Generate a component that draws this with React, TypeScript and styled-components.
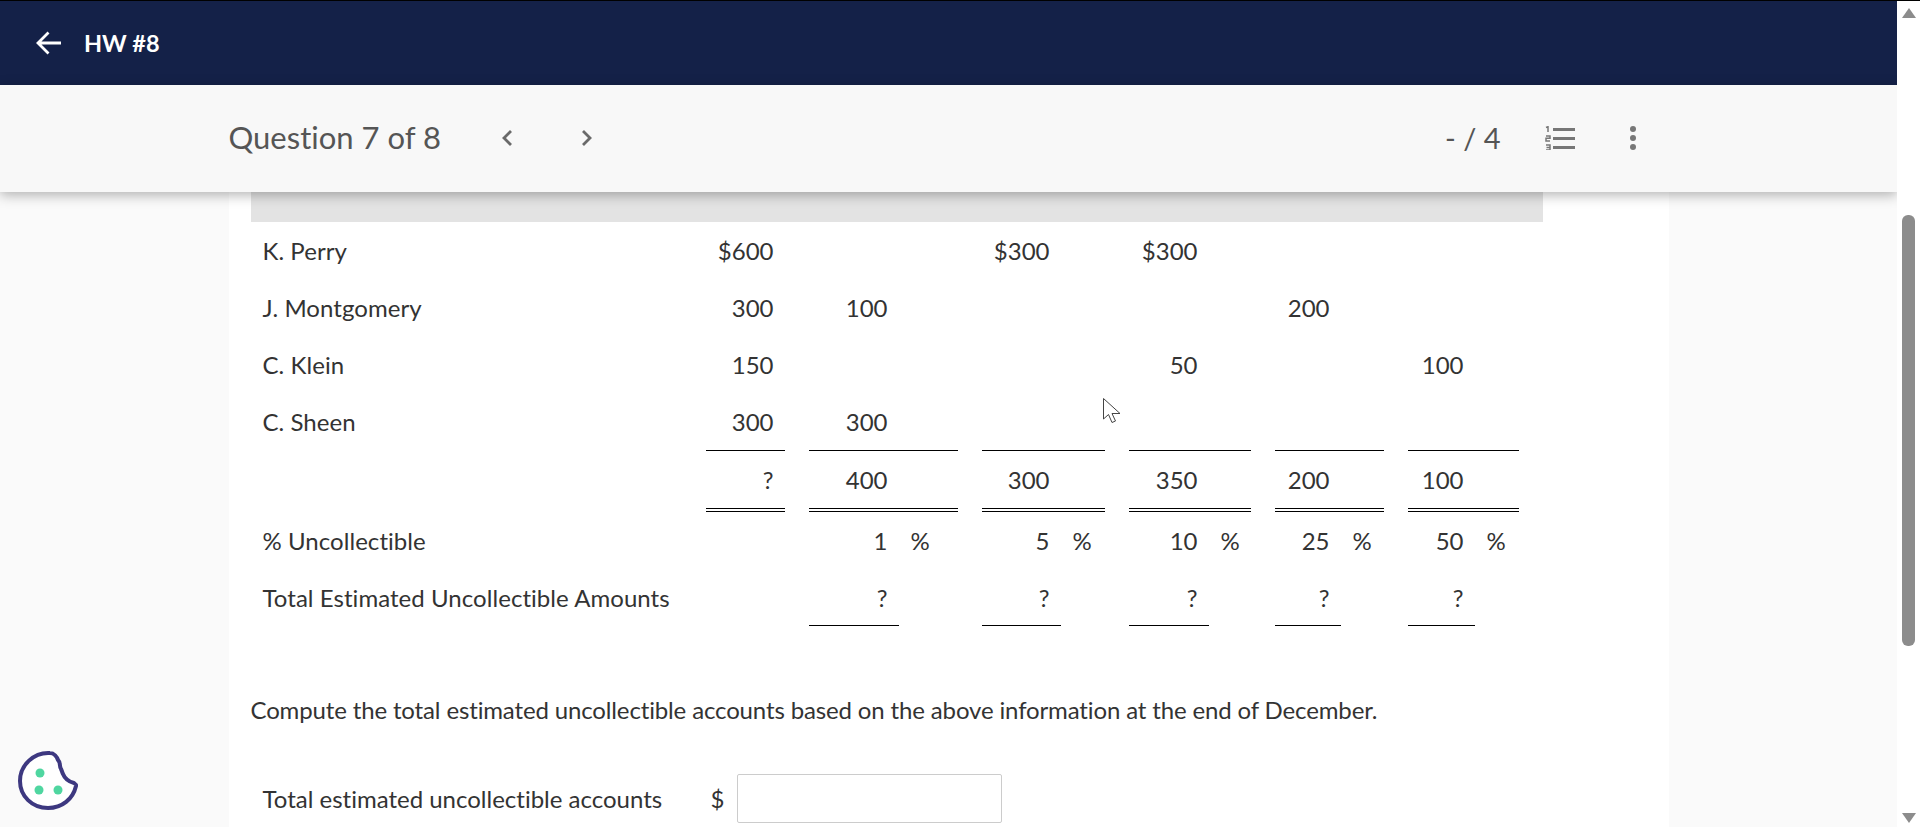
import React from "react";
import styled, { createGlobalStyle } from "styled-components";

type Rule = "none" | "single" | "double";

interface Row {
  label?: string;
  first?: string;
  cells: string[];
  rule?: "sum" | "total" | "answer";
  percent?: boolean;
}

const GROUPS = [
  [90, 59],
  [79, 44],
  [80, 42],
  [66, 43],
  [67, 44],
];

const rows: Row[] = [
  { label: "K. Perry", first: "$600", cells: ["", "$300", "$300", "", ""] },
  { label: "J. Montgomery", first: "300", cells: ["100", "", "", "200", ""] },
  { label: "C. Klein", first: "150", cells: ["", "", "50", "", "100"] },
  { label: "C. Sheen", first: "300", cells: ["300", "", "", "", ""], rule: "sum" },
  { first: "?", cells: ["400", "300", "350", "200", "100"], rule: "total" },
  { label: "% Uncollectible", cells: ["1", "5", "10", "25", "50"], percent: true },
  { label: "Total Estimated Uncollectible Amounts", cells: ["?", "?", "?", "?", "?"], rule: "answer" },
];

const GlobalStyle = createGlobalStyle`
  html, body {
    margin: 0;
    height: 100%;
    overflow: hidden;
    background: #fafafa;
    font-family: Lato, "Liberation Sans", sans-serif;
    font-variant-ligatures: none;
    color: #333;
  }
`;

const Screen = styled.div`
  position: relative;
  display: flex;
  box-sizing: border-box;
  height: 827px;
  border-top: 1px solid #000;
  overflow: hidden;
`;

const Page = styled.div`
  flex: 1;
  min-width: 0;
  display: flex;
  flex-direction: column;
`;

const TopBar = styled.header`
  height: 84px;
  flex-shrink: 0;
  display: flex;
  align-items: center;
  gap: 23px;
  padding-left: 36px;
  background: #142148;
  color: #fff;
  font-size: 23.5px;
  font-weight: 700;
`;

const QuestionBar = styled.div`
  position: relative;
  z-index: 2;
  height: 107px;
  flex-shrink: 0;
  background: #f8f8f8;
  box-shadow: 0 3px 12px rgba(0, 0, 0, 0.3);
`;

const QuestionInner = styled.div`
  width: 1440px;
  height: 100%;
  margin: 0 auto;
  display: flex;
  align-items: center;
  color: #555;
`;

const QuestionTitle = styled.div`
  font-size: 31px;
  margin-top: -3px;
  margin-right: 60px;
`;

const Chevron = styled.svg`
  width: 13px;
  height: 18px;
  margin-top: -2px;
  fill: none;
  stroke: #6a6a6a;
  stroke-width: 2.8;
  margin-right: 66px;
`;

const Score = styled.div`
  margin-left: auto;
  font-size: 29px;
  margin-top: -2px;
  margin-right: 44px;
`;

const NumberedList = styled.svg`
  width: 30px;
  height: 24px;
  margin-top: -2px;
  margin-right: 55px;
`;

const Kebab = styled.div`
  display: flex;
  flex-direction: column;
  gap: 3px;
  margin-top: -2px;
  margin-right: 33px;
`;

const Dot = styled.span`
  width: 6px;
  height: 6px;
  border-radius: 50%;
  background: #777;
`;

const Main = styled.main`
  flex: 1;
  min-height: 0;
  overflow: hidden;
`;

const Card = styled.section`
  box-sizing: border-box;
  width: 1440px;
  height: 100%;
  margin: 0 auto;
  padding: 0 126px 0 22px;
  background: #fff;
`;

const Band = styled.div`
  height: 30px;
  background: #e3e3e3;
`;

const Ledger = styled.table`
  table-layout: fixed;
  width: 1268px;
  border-collapse: separate;
  border-spacing: 0;
  font-size: 24px;
`;

const LedgerRow = styled.tr<{ $kind?: Row["rule"] }>`
  height: ${(p) => (p.$kind === "total" ? 61 : p.$kind === "sum" ? 58 : 57)}px;
`;

const Cell = styled.td<{ $rule?: Rule; $align?: string }>`
  box-sizing: border-box;
  padding: ${(p) => (p.$align === "left" ? "15px 0 0 12px" : "15px 11px 0 0")};
  text-align: ${(p) => p.$align || "right"};
  vertical-align: top;
  line-height: 27px;
  white-space: nowrap;
  border-bottom: ${(p) =>
    p.$rule === "single" ? "1px solid #000" : p.$rule === "double" ? "4px double #000" : "none"};
`;

const LabelCell = styled(Cell)`
  padding: 15px 0 0 12px;
  text-align: left;
  letter-spacing: 0.05px;
`;

const Prompt = styled.p`
  margin: 70px 0 0;
  font-size: 24px;
  line-height: 27px;
  letter-spacing: -0.14px;
`;

const AnswerRow = styled.div`
  display: flex;
  align-items: center;
  margin-top: 51px;
  padding-left: 12px;
  font-size: 24px;
`;

const AnswerLabel = styled.label`
  width: 448px;
`;

const AnswerInput = styled.input`
  box-sizing: border-box;
  width: 265px;
  height: 49px;
  margin-left: 13px;
  border: 1.5px solid #ccc;
  border-radius: 2px;
  background: #fff;
`;

const Scrollbar = styled.aside`
  position: relative;
  z-index: 3;
  width: 23px;
  flex-shrink: 0;
  display: flex;
  flex-direction: column;
  align-items: center;
  background: #fff;
  padding: 7px 0 4px;
`;

const ArrowUp = styled.div`
  border-left: 7.5px solid transparent;
  border-right: 7.5px solid transparent;
  border-bottom: 10px solid #8c8c8c;
`;

const ArrowDown = styled(ArrowUp)`
  margin-top: auto;
  border-bottom: none;
  border-top: 10px solid #8c8c8c;
`;

const Thumb = styled.div`
  width: 13px;
  height: 431px;
  margin-top: 197px;
  border-radius: 6px;
  background: #8c8c8c;
`;

const CookieBadge = styled.svg`
  position: absolute;
  left: 16px;
  top: 747px;
  width: 64px;
  height: 64px;
`;

const Pointer = styled.svg`
  position: absolute;
  left: 1102px;
  top: 396px;
  width: 22px;
  height: 29px;
`;

function ruleFor(row: Row, part: "a" | "b"): Rule {
  if (row.rule === "sum") return "single";
  if (row.rule === "total") return "double";
  if (row.rule === "answer" && part === "a") return "single";
  return "none";
}

export default function App() {
  return (
    <>
      <GlobalStyle />
      <Screen>
        <Page>
          <TopBar>
            <svg width="25" height="24" viewBox="0 0 25 24" fill="none" stroke="#fff" strokeWidth="2.8">
              <path d="M2 12H25M12.5 1.500L2 12l10.500 10.500" />
            </svg>
            HW #8
          </TopBar>
          <QuestionBar>
            <QuestionInner>
              <QuestionTitle>Question 7 of 8</QuestionTitle>
              <Chevron viewBox="0 0 13 18">
                <path d="M10 2L3 9l7 7" />
              </Chevron>
              <Chevron viewBox="0 0 13 18">
                <path d="M3 2l7 7-7 7" />
              </Chevron>
              <Score>- / 4</Score>
              <NumberedList viewBox="0 0 30 24" fill="none" stroke="#777">
                <path d="M8 3.500H30M8 12.500H30M8 21.500H30" strokeWidth="3" />
                <path d="M1 1.500l2-.8V6M1 10h4v2.200H1V15h4M1 19h4v5H1M1.500 21.500h3" strokeWidth="1.500" />
              </NumberedList>
              <Kebab>
                <Dot />
                <Dot />
                <Dot />
              </Kebab>
            </QuestionInner>
          </QuestionBar>
          <Main>
            <Card>
              <Band />
              <Ledger>
                <colgroup>
                  <col width={455} />
                  <col width={79} />
                  {GROUPS.map(([a, b], i) => (
                    <React.Fragment key={i}>
                      <col width={24} />
                      <col width={a} />
                      <col width={b} />
                    </React.Fragment>
                  ))}
                </colgroup>
                <tbody>
                  {rows.map((row, r) => (
                    <LedgerRow key={r} $kind={row.rule}>
                      <LabelCell>{row.label}</LabelCell>
                      <Cell $rule={row.first ? ruleFor(row, "a") : "none"}>{row.first}</Cell>
                      {row.cells.map((value, c) => (
                        <React.Fragment key={c}>
                          <Cell />
                          <Cell $rule={ruleFor(row, "a")}>{value}</Cell>
                          <Cell $rule={ruleFor(row, "b")} $align="left">
                            {row.percent ? "%" : ""}
                          </Cell>
                        </React.Fragment>
                      ))}
                    </LedgerRow>
                  ))}
                </tbody>
              </Ledger>
              <Prompt>
                Compute the total estimated uncollectible accounts based on the above information at the end of
                December.
              </Prompt>
              <AnswerRow>
                <AnswerLabel>Total estimated uncollectible accounts</AnswerLabel>
                $
                <AnswerInput type="text" />
              </AnswerRow>
            </Card>
          </Main>
        </Page>
        <Scrollbar>
          <ArrowUp />
          <Thumb />
          <ArrowDown />
        </Scrollbar>
        <CookieBadge viewBox="0 0 64 64" fill="none">
          <path
            d="M34 5C18 4 4 17 4 33c0 15 12 27 28 27 14 0 25-9 28-22 .3-1.500-.5-2-2-3-4-1-9-4-11-9-1-2-1-3-2-5-2-3 0-6-3-9-1-3-4-7-8-7z"
            fill="#fff"
            stroke="#3d3880"
            strokeWidth="4"
          />
          <circle cx="24" cy="25" r="4.500" fill="#4fd6a0" />
          <circle cx="23" cy="42" r="4.500" fill="#4fd6a0" />
          <circle cx="42" cy="42" r="4.500" fill="#4fd6a0" />
        </CookieBadge>
        <Pointer viewBox="0 0 22 29">
          <path d="M1.500 1.500V22l5-4.500 3.500 8 3.500-1.500-3.500-7.500H18z" fill="#fff" stroke="#444" strokeWidth="1" />
        </Pointer>
      </Screen>
    </>
  );
}
